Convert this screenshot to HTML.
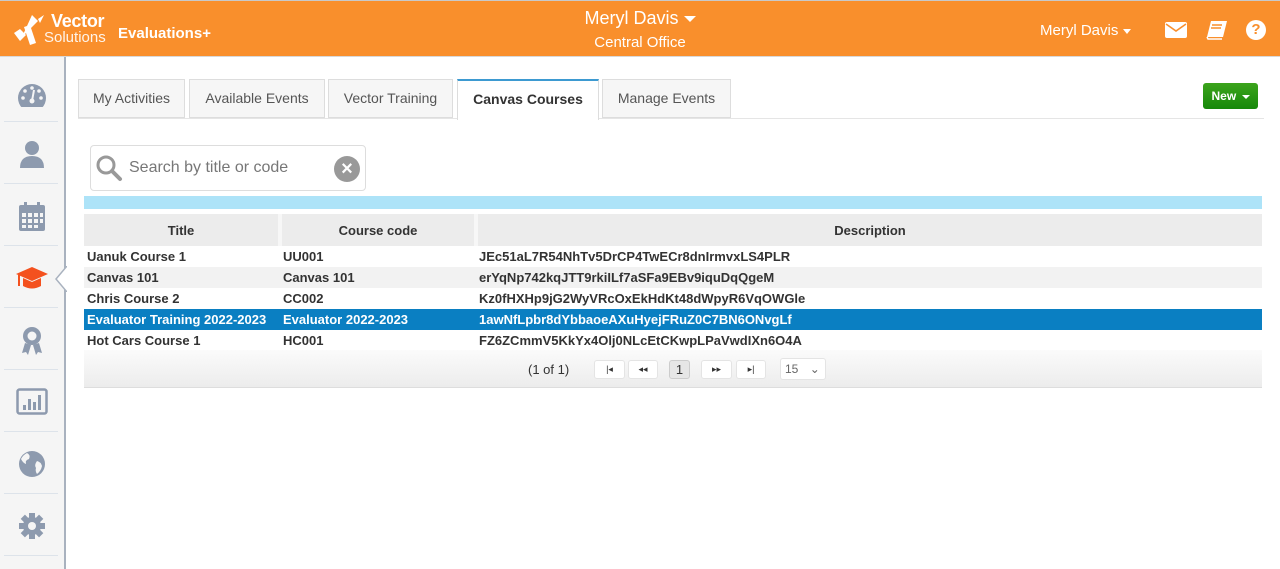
<!DOCTYPE html>
<html><head><style>
*{box-sizing:border-box;margin:0;padding:0}
body{width:1280px;height:569px;overflow:hidden;font-family:"Liberation Sans",Arial,sans-serif;background:#fff;position:relative}
.hdr{position:absolute;left:0;top:0;width:1280px;height:57px;background:#f98f2c;border-top:1px solid #c9c9c9;border-bottom:1px solid #d8d8d8;color:#fff}
.side{position:absolute;left:0;top:57px;width:66px;height:512px;background:#f5f5f5;border-right:2px solid #a9b2bf}
.sep{position:absolute;left:4px;width:54px;height:1px;background:#dde3ea}
.ic{position:absolute;left:15px;width:34px;height:34px}
.tab{position:absolute;top:79px;height:39px;border:1px solid #ddd;background:#f6f6f6;color:#555;font-size:14px;line-height:37px;text-align:center}
.tab.act{background:#fff;border-top:2px solid #3d9ad1;border-bottom:none;color:#333;font-weight:bold;height:41px}
table{position:absolute;left:84px;top:214px;width:1178px;border-collapse:collapse;font-size:13px;font-weight:bold;color:#333}
th{background:#ececec;font-weight:bold;height:32px;text-align:center;font-size:13px;border-right:4px solid #f7f7f7}
td{height:21px;padding-left:3px;background:#fff}
tr.alt td{background:#f2f2f2}
tr.sel td{background:#0a7fc2;color:#fff}
.pg{position:absolute;left:84px;top:350px;width:1178px;height:38px;background:linear-gradient(#fbfbfb,#ececec);border-bottom:1px solid #ddd}
.b{position:absolute;top:10px;height:19px;background:#fff;border:1px solid #e4e4e4;border-radius:3px;font-size:9px;color:#333;text-align:center;line-height:17px}
.car{display:inline-block;width:0;height:0;border-left:5px solid transparent;border-right:5px solid transparent;border-top:6px solid #fff;vertical-align:middle}
</style></head><body>
<div class="hdr">
 <svg style="position:absolute;left:12px;top:12px" width="36" height="34" viewBox="0 0 36 34" fill="#fff"><path d="M20 2 L26 8 L10 24 Z"/><path d="M2 20 L8 16 L14 22 L8 28Z"/><path d="M12 14 L18 12 L24 30 L18 32Z"/><path d="M26 6 L32 2 L28 10Z"/></svg>
 <div style="position:absolute;left:51px;top:10px;font-size:18px;font-weight:bold;letter-spacing:-.3px">Vector</div>
 <div style="position:absolute;left:44px;top:28px;font-size:15px;font-weight:300;opacity:.9">Solutions</div>
 <div style="position:absolute;left:118px;top:24px;font-size:15px;font-weight:bold">Evaluations+</div>
 <div style="position:absolute;left:540px;top:7px;width:200px;text-align:center;font-size:18px">Meryl Davis <span class="car" style="border-width:6px 6px 0"></span></div>
 <div style="position:absolute;left:540px;top:33px;width:200px;text-align:center;font-size:15px">Central Office</div>
 <div style="position:absolute;left:1040px;top:21px;font-size:15px">Meryl Davis <span class="car" style="border-width:5px 4px 0"></span></div>
 <svg style="position:absolute;left:1165px;top:21px" width="22" height="16" viewBox="0 0 22 16"><rect width="22" height="16" rx="2" fill="#fff"/><path d="M1 2 L11 9 L21 2" stroke="#f98f2c" stroke-width="1.6" fill="none"/></svg>
 <svg style="position:absolute;left:1206px;top:19px" width="22" height="20" viewBox="0 0 22 20"><path d="M5 1h16l-4 16H1z" fill="#fff"/><path d="M6 5h10M5 8h10" stroke="#f98f2c" stroke-width="1.4"/><path d="M1 17 L2 19 H16" stroke="#fff" stroke-width="1.5" fill="none"/></svg>
 <div style="position:absolute;left:1246px;top:19px;width:20px;height:20px;border-radius:50%;background:#fff;color:#f98f2c;font-weight:bold;font-size:15px;text-align:center;line-height:20px">?</div>
</div>
<div class="side">
 <div class="sep" style="top:64px"></div><div class="sep" style="top:126px"></div><div class="sep" style="top:188px"></div><div class="sep" style="top:250px"></div><div class="sep" style="top:312px"></div><div class="sep" style="top:374px"></div><div class="sep" style="top:436px"></div><div class="sep" style="top:498px"></div>
 <svg class="ic" style="top:21px" viewBox="0 0 34 34"><circle cx="17" cy="20" r="14" fill="#8d9aae"/><rect x="0" y="29" width="34" height="6" fill="#f5f5f5"/><circle cx="17" cy="23" r="2.5" fill="#f5f5f5"/><path d="M17 23 L19 12" stroke="#f5f5f5" stroke-width="2"/><circle cx="8" cy="20" r="1.8" fill="#f5f5f5"/><circle cx="10" cy="13" r="1.8" fill="#f5f5f5"/><circle cx="26" cy="20" r="1.8" fill="#f5f5f5"/><circle cx="24" cy="13" r="1.8" fill="#f5f5f5"/><circle cx="17" cy="10" r="1.8" fill="#f5f5f5"/></svg>
 <svg class="ic" style="top:80px" viewBox="0 0 34 34"><circle cx="17" cy="11" r="7" fill="#8d9aae"/><path d="M5 31 Q5 19 17 19 Q29 19 29 31Z" fill="#8d9aae"/></svg>
 <svg class="ic" style="top:142px" viewBox="0 0 34 34"><rect x="4" y="6" width="26" height="26" rx="2" fill="#8d9aae"/><rect x="9" y="3" width="3" height="6" fill="#8d9aae"/><rect x="22" y="3" width="3" height="6" fill="#8d9aae"/><g fill="#f5f5f5"><rect x="7" y="14" width="4" height="4"/><rect x="13" y="14" width="4" height="4"/><rect x="19" y="14" width="4" height="4"/><rect x="25" y="14" width="3" height="4"/><rect x="7" y="20" width="4" height="4"/><rect x="13" y="20" width="4" height="4"/><rect x="19" y="20" width="4" height="4"/><rect x="25" y="20" width="3" height="4"/><rect x="7" y="26" width="4" height="3"/><rect x="13" y="26" width="4" height="3"/><rect x="19" y="26" width="4" height="3"/></g></svg>
 <svg class="ic" style="top:205px" viewBox="0 0 34 34"><path d="M1 12 L17 5 L33 12 L17 19Z" fill="#f4511e"/><path d="M8 16 V24 Q17 29 26 24 V16 L17 20Z" fill="#f4511e"/><path d="M4 13 V24" stroke="#f4511e" stroke-width="2"/></svg>
 <svg style="position:absolute;left:55px;top:209px" width="12" height="26" viewBox="0 0 12 26"><path d="M12 0 L1 13 L12 26" fill="#fff" stroke="#a9b2bf" stroke-width="1.5"/></svg>
 <svg class="ic" style="top:266px" viewBox="0 0 34 34"><circle cx="17" cy="13" r="9" fill="#8d9aae"/><circle cx="17" cy="13" r="4.5" fill="#f5f5f5"/><path d="M10 20 L7 30 L11 29 L13 32 L16 22Z M24 20 L27 30 L23 29 L21 32 L18 22Z" fill="#8d9aae"/></svg>
 <svg class="ic" style="top:328px" viewBox="0 0 34 34"><rect x="2.5" y="4.5" width="29" height="24" rx="2" fill="none" stroke="#8d9aae" stroke-width="2.5"/><rect x="8" y="20" width="3" height="5" fill="#8d9aae"/><rect x="13" y="14" width="3" height="11" fill="#8d9aae"/><rect x="18" y="17" width="3" height="8" fill="#8d9aae"/><rect x="23" y="10" width="3" height="15" fill="#8d9aae"/></svg>
 <svg class="ic" style="top:390px" viewBox="0 0 34 34"><circle cx="17" cy="17" r="13" fill="#8d9aae"/><path d="M12 6 Q16 8 14 12 Q10 13 11 17 Q8 16 6 12 Q8 8 12 6Z M22 14 Q26 15 27 19 Q26 24 22 27 Q20 24 21 21 Q19 18 22 14Z" fill="#f5f5f5"/></svg>
 <svg class="ic" style="top:452px" viewBox="0 0 34 34"><g fill="#8d9aae"><circle cx="17" cy="17" r="9"/><rect x="14" y="4" width="6" height="26"/><rect x="4" y="14" width="26" height="6"/><rect x="14" y="4" width="6" height="26" transform="rotate(45 17 17)"/><rect x="14" y="4" width="6" height="26" transform="rotate(-45 17 17)"/></g><circle cx="17" cy="17" r="4" fill="#f5f5f5"/></svg>
</div>
<div style="position:absolute;left:78px;top:118px;width:1186px;height:1px;background:#e5e5e5"></div>
<div class="tab" style="left:78px;width:107px">My Activities</div>
<div class="tab" style="left:189px;width:136px">Available Events</div>
<div class="tab" style="left:328px;width:125px">Vector Training</div>
<div class="tab act" style="left:457px;width:142px">Canvas Courses</div>
<div class="tab" style="left:602px;width:129px">Manage Events</div>
<div style="position:absolute;left:1203px;top:83px;width:55px;height:26px;background:linear-gradient(#3ca41c,#16880a);border-radius:3px;color:#fff;font-size:12px;font-weight:bold;line-height:26px;text-align:center">New <span class="car" style="border-width:4px 4px 0;margin-left:2px"></span></div>
<div style="position:absolute;left:90px;top:145px;width:276px;height:46px;border:1px solid #ddd;border-radius:4px"></div>
<svg style="position:absolute;left:95px;top:154px" width="28" height="28" viewBox="0 0 28 28"><circle cx="11" cy="11" r="8" fill="none" stroke="#999" stroke-width="3"/><path d="M17 17 L25 25" stroke="#999" stroke-width="4" stroke-linecap="round"/></svg>
<div style="position:absolute;left:129px;top:159px;font-size:16px;color:#777">Search by title or code</div>
<div style="position:absolute;left:334px;top:156px;width:26px;height:26px;border-radius:50%;background:#999;color:#fff;font-size:20px;font-weight:bold;text-align:center;line-height:26px">×</div>
<div style="position:absolute;left:84px;top:196px;width:1178px;height:13px;background:#ade3f8"></div>
<table>
<tr><th style="width:196px">Title</th><th style="width:196px">Course code</th><th style="border-right:none">Description</th></tr>
<tr><td>Uanuk Course 1</td><td>UU001</td><td>JEc51aL7R54NhTv5DrCP4TwECr8dnIrmvxLS4PLR</td></tr>
<tr class="alt"><td>Canvas 101</td><td>Canvas 101</td><td>erYqNp742kqJTT9rkiILf7aSFa9EBv9iquDqQgeM</td></tr>
<tr><td>Chris Course 2</td><td>CC002</td><td>Kz0fHXHp9jG2WyVRcOxEkHdKt48dWpyR6VqOWGle</td></tr>
<tr class="sel"><td>Evaluator Training 2022-2023</td><td>Evaluator 2022-2023</td><td>1awNfLpbr8dYbbaoeAXuHyejFRuZ0C7BN6ONvgLf</td></tr>
<tr><td>Hot Cars Course 1</td><td>HC001</td><td>FZ6ZCmmV5KkYx4Olj0NLcEtCKwpLPaVwdIXn6O4A</td></tr>
</table>
<div class="pg">
 <div style="position:absolute;left:444px;top:12px;font-size:13px;color:#333">(1 of 1)</div>
 <div class="b" style="left:510px;width:31px">|◂</div>
 <div class="b" style="left:544px;width:30px">◂◂</div>
 <div class="b" style="left:585px;width:21px;background:#e6e6e6;border-color:#ccc;font-size:13px">1</div>
 <div class="b" style="left:617px;width:31px">▸▸</div>
 <div class="b" style="left:652px;width:30px">▸|</div>
 <div class="b" style="left:696px;width:46px;height:22px;top:8px;font-size:12px;color:#666;text-align:left;padding-left:4px;line-height:20px">15 <span style="margin-left:8px">⌄</span></div>
</div>
</body></html>
